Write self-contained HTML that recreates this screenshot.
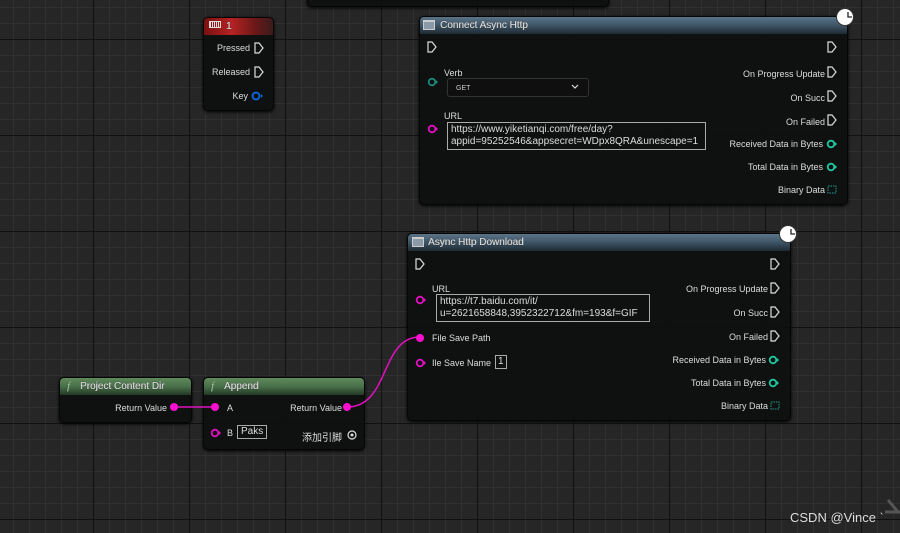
<!DOCTYPE html>
<html><head><meta charset="utf-8"><style>
body{margin:0;width:900px;height:533px;overflow:hidden;background:#262626;font-family:"Liberation Sans","Noto Sans CJK SC",sans-serif;}
#g{position:absolute;left:0;top:0;width:900px;height:533px;
background-image:
linear-gradient(to right,#111 1px,transparent 1px),
linear-gradient(to bottom,#111 1px,transparent 1px),
linear-gradient(to right,#303030 1px,transparent 1px),
linear-gradient(to bottom,#303030 1px,transparent 1px);
background-size:96px 96px,96px 96px,16px 16px,16px 16px;
background-position:93px 39px,93px 39px,13px 7px,13px 7px;}
.n{position:absolute;background:rgba(14,16,15,0.95);border:1px solid #050505;border-radius:5px;box-shadow:0 1px 3px #000;color:#ddd;font-size:9px;}
.h{position:absolute;left:0;right:0;top:0;height:17px;border-radius:4px 4px 0 0;font-size:10px;color:#e0e0e0;line-height:17px;padding-left:20px;box-sizing:border-box;text-shadow:0 0 1px #000,0.4px 0 0 #e0e0e0;}
.t{position:absolute;white-space:nowrap;}
.r{text-align:right;}
.box{position:absolute;border:1px solid #aaa;color:#ddd;font-size:10px;line-height:12px;padding:1px 3px;white-space:nowrap;}
svg{position:absolute;overflow:visible;}
.clk{position:absolute;width:16px;height:16px;border-radius:50%;background:#fff;border:1px solid #333;}
.blue{background:linear-gradient(to bottom,#5a7488 0%,#3d5465 50%,#1e2a33 100%);}
.green{background:linear-gradient(to bottom,#5f8a5a 0%,#48704a 50%,#243824 100%);}
</style></head><body>
<div id="g"></div>
<div class="n" style="left:307px;top:-8px;width:300px;height:13px;border-radius:4px;"></div>

<div class="n" style="left:203px;top:17px;width:69px;height:92px;">
<div class="h" style="background:linear-gradient(to right,#7a1010,#b52222 40%,#6a1818 75%,#3a1c1c);padding-left:22px;">1</div>
</div>
<div class="t" style="left:209px;top:21px;width:12px;height:7px;border:1px solid #ddd;box-sizing:border-box;background:repeating-linear-gradient(to right,#ddd 0 1px,transparent 1px 2px);"></div>
<div class="t r" style="left:200px;top:43px;width:50px;color:#ddd;font-size:9px;">Pressed</div>
<div class="t r" style="left:200px;top:67px;width:50px;color:#ddd;font-size:9px;">Released</div>
<div class="t r" style="left:200px;top:91px;width:48px;color:#ddd;font-size:9px;">Key</div>
<svg style="left:0;top:0" width="900" height="533">
<g fill="none" stroke="#ddd" stroke-width="1.2">
<path d="M255 43h4l4 5-4 5h-4z"/><path d="M255 67h4l4 5-4 5h-4z"/>
</g>
<circle cx="256" cy="96" r="3.5" fill="none" stroke="#0a6adf" stroke-width="1.8"/><path d="M261 94l2 2-2 2z" fill="#0a6adf"/>
</svg>

<div class="n" style="left:419px;top:16px;width:427px;height:187px;">
<div class="h blue">Connect Async Http</div>
<div class="t" style="left:24px;top:51px">Verb</div>
<div class="t" style="left:27px;top:61px;width:142px;height:19px;border:1px solid #333;border-radius:3px;background:#0f0f0f;font-size:7px;line-height:19px;padding-left:8px;box-sizing:border-box;color:#ccc;">GET</div>
<div class="t" style="left:24px;top:94px">URL</div>
<div class="box" style="left:27px;top:105px;width:251px;">https://www.yiketianqi.com/free/day?<br>appid=95252546&amp;appsecret=WDpx8QRA&amp;unescape=1</div>
<div class="t r" style="right:22px;top:52px">On Progress Update</div>
<div class="t r" style="right:22px;top:76px">On Succ</div>
<div class="t r" style="right:22px;top:100px">On Failed</div>
<div class="t r" style="right:24px;top:122px">Received Data in Bytes</div>
<div class="t r" style="right:24px;top:145px">Total Data in Bytes</div>
<div class="t r" style="right:22px;top:168px">Binary Data</div>
</div>
<div class="clk" style="left:836px;top:8px"></div>
<div class="t" style="left:423px;top:20px;width:12px;height:10px;border:1px solid #ccc;box-sizing:border-box;background:#8a9aa8;border-top-width:2px"></div>

<div class="n" style="left:407px;top:233px;width:382px;height:186px;">
<div class="h blue">Async Http Download</div>
<div class="t" style="left:24px;top:50px">URL</div>
<div class="box" style="left:28px;top:60px;width:206px;">https://t7.baidu.com/it/<br>u=2621658848,3952322712&amp;fm=193&amp;f=GIF</div>
<div class="t" style="left:24px;top:99px">File Save Path</div>
<div class="t" style="left:24px;top:124px">Ile Save Name</div>
<div class="box" style="left:87px;top:121px;width:6px;padding:0 2px;line-height:12px;">1</div>
<div class="t r" style="right:22px;top:50px">On Progress Update</div>
<div class="t r" style="right:22px;top:74px">On Succ</div>
<div class="t r" style="right:22px;top:98px">On Failed</div>
<div class="t r" style="right:24px;top:121px">Received Data in Bytes</div>
<div class="t r" style="right:24px;top:144px">Total Data in Bytes</div>
<div class="t r" style="right:22px;top:167px">Binary Data</div>
</div>
<div class="clk" style="left:779px;top:225px"></div>
<div class="t" style="left:412px;top:237px;width:12px;height:10px;border:1px solid #ccc;box-sizing:border-box;background:#8a9aa8;border-top-width:2px"></div>

<div class="n" style="left:59px;top:377px;width:131px;height:44px;">
<div class="h green"><i style="position:absolute;left:7px;color:#9fd49a;font-family:'Liberation Serif',serif;">f</i>Project Content Dir</div>
<div class="t r" style="right:24px;top:25px">Return Value</div>
</div>
<div class="n" style="left:203px;top:377px;width:160px;height:71px;">
<div class="h green"><i style="position:absolute;left:7px;color:#9fd49a;font-family:'Liberation Serif',serif;">f</i>Append</div>
<div class="t" style="left:23px;top:25px">A</div>
<div class="t" style="left:23px;top:50px">B</div>
<div class="box" style="left:33px;top:47px;padding:0 3px;line-height:12px;">Paks</div>
<div class="t r" style="right:22px;top:25px">Return Value</div>
<div class="t r" style="right:22px;top:51px;font-size:10px;">添加引脚</div>
</div>

<svg style="left:0;top:0" width="900" height="533">
<g fill="none" stroke="#ddd" stroke-width="1.2">
<path d="M428 42h4l4 5-4 5h-4z"/><path d="M828 42h4l4 5-4 5h-4z"/>
<path d="M828 67h4l4 5-4 5h-4z"/><path d="M828 91h4l4 5-4 5h-4z"/><path d="M828 115h4l4 5-4 5h-4z"/>
<path d="M416 259h4l4 5-4 5h-4z"/><path d="M771 259h4l4 5-4 5h-4z"/>
<path d="M771 283h4l4 5-4 5h-4z"/><path d="M771 307h4l4 5-4 5h-4z"/><path d="M771 331h4l4 5-4 5h-4z"/>
<path d="M572 85l3 3 3-3"/>
</g>
<g fill="none" stroke-width="1.8">
<circle cx="432" cy="82" r="3.3" stroke="#1a8a7a"/>
<circle cx="432" cy="129" r="3.3" stroke="#e010c0"/>
<circle cx="831" cy="144" r="3.3" stroke="#20c8a0"/>
<circle cx="831" cy="167" r="3.3" stroke="#20c8a0"/>
<circle cx="420" cy="300" r="3.3" stroke="#e010c0"/>
<circle cx="420" cy="363" r="3.3" stroke="#e010c0"/>
<circle cx="773" cy="360" r="3.3" stroke="#20c8a0"/>
<circle cx="773" cy="383" r="3.3" stroke="#20c8a0"/>
<circle cx="215" cy="433" r="3.3" stroke="#e010c0"/>
<circle cx="352" cy="435" r="4" stroke="#ddd" stroke-width="1.2"/>
</g>
<g>
<path d="M436 80l2 2-2 2z" fill="#1a8a7a"/><path d="M436 127l2 2-2 2z" fill="#e010c0"/>
<path d="M835 142l2 2-2 2z" fill="#20c8a0"/><path d="M835 165l2 2-2 2z" fill="#20c8a0"/>
<path d="M424 298l2 2-2 2z" fill="#e010c0"/><path d="M424 361l2 2-2 2z" fill="#e010c0"/>
<path d="M777 358l2 2-2 2z" fill="#20c8a0"/><path d="M777 381l2 2-2 2z" fill="#20c8a0"/>
<path d="M219 431l2 2-2 2z" fill="#e010c0"/>
</g>
<circle cx="352" cy="435" r="1.5" fill="#ddd"/>
<rect x="828" y="186" width="8" height="7" fill="none" stroke="#20a090" stroke-dasharray="1.5 1"/>
<rect x="771" y="402" width="8" height="7" fill="none" stroke="#20a090" stroke-dasharray="1.5 1"/>
<path d="M174 407C195 407 195 407 215 407" stroke="#e010c0" stroke-width="1.5" fill="none"/>
<path d="M347 407C390 407 380 337 420 337" stroke="#e010c0" stroke-width="1.5" fill="none"/>
<g fill="#ff10d0">
<circle cx="174" cy="407" r="4"/><circle cx="215" cy="407" r="4"/><circle cx="347" cy="407" r="4"/><circle cx="420" cy="338" r="4"/>
</g>
<path d="M848 12v5h4" stroke="#222" stroke-width="1.3" fill="none"/><path d="M791 229v5h4" stroke="#222" stroke-width="1.3" fill="none"/>
<path d="M888 500l10 12M885 512h15" stroke="#555" stroke-width="3" fill="none"/>
</svg>
<div class="t" style="left:790px;top:510px;color:#ddd;font-size:13px;">CSDN @Vince ˋ</div>
</body></html>
